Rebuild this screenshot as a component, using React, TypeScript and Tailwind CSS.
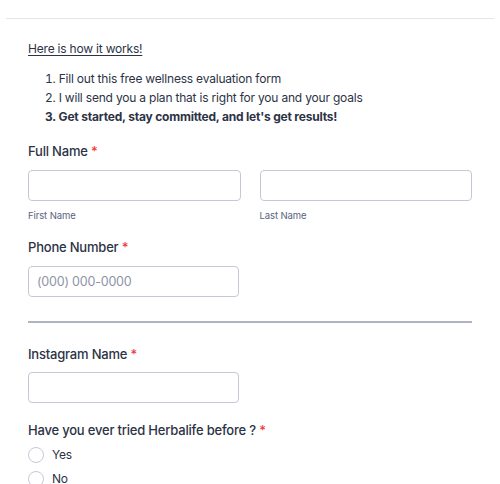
export default function App() {
  return (
    <div className="w-[500px] h-[484px] overflow-hidden bg-white text-[#2c3345]" style={{ fontFamily: 'Inter, "Noto Sans", sans-serif' }}>
      <div className="pt-[18px] px-[6px]">
        <div className="h-px bg-[#e3e5ea]" />
      </div>

      <div className="px-[28px]">
        <p className="mt-[21px] text-[12px] leading-[18px] tracking-[-0.2px] underline underline-offset-2 decoration-[#2c3345]">Here is how it works!</p>
        <ol className="mt-[11px] pl-[17px] text-[12px] leading-[19px] tracking-[-0.2px] list-decimal list-inside">
          <li>Fill out this free wellness evaluation form</li>
          <li>I will send you a plan that is right for you and your goals</li>
          <li className="font-bold">Get started, stay committed, and let's get results!</li>
        </ol>

        {/* Full Name */}
        <div className="mt-[15px]">
          <label className="block text-[13px] leading-[20px] tracking-[-0.2px] font-medium">
            Full Name <span className="text-[#f23a3c]">*</span>
          </label>
          <div className="mt-[9px] grid grid-cols-2 gap-[19px]">
            <div>
              <input className="block w-full h-[31px] rounded-[4px] border border-[#c5c9d6] bg-white" />
              <span className="block mt-[8px] text-[9.5px] leading-[14px] tracking-[-0.1px] text-[#57647e]">First Name</span>
            </div>
            <div>
              <input className="block w-full h-[31px] rounded-[4px] border border-[#c5c9d6] bg-white" />
              <span className="block mt-[8px] text-[9.5px] leading-[14px] tracking-[-0.1px] text-[#57647e]">Last Name</span>
            </div>
          </div>
        </div>

        {/* Phone */}
        <div className="mt-[14px]">
          <label className="block text-[13px] leading-[20px] tracking-[-0.2px] font-medium">
            Phone Number <span className="text-[#f23a3c]">*</span>
          </label>
          <input
            placeholder="(000) 000-0000"
            className="mt-[9px] block w-[211px] h-[31px] rounded-[4px] border border-[#c5c9d6] bg-white px-[8px] text-[12.5px] tracking-[-0.2px] placeholder:text-[#8d94a6]"
          />
        </div>

        <div className="mt-[24px] h-[2px] bg-[#b0b4c0]" />

        {/* Instagram */}
        <div className="mt-[21px]">
          <label className="block text-[13px] leading-[20px] tracking-[-0.2px] font-medium">
            Instagram Name <span className="text-[#f23a3c]">*</span>
          </label>
          <input className="mt-[8px] block w-[211px] h-[31px] rounded-[4px] border border-[#c5c9d6] bg-white" />
        </div>

        {/* Herbalife */}
        <div className="mt-[17px]">
          <label className="block text-[13px] leading-[20px] tracking-[-0.2px] font-medium">
            Have you ever tried Herbalife before ? <span className="text-[#f23a3c]">*</span>
          </label>
          <div className="mt-[7px] flex flex-col gap-[8px]">
            {['Yes', 'No'].map((o) => (
              <label key={o} className="flex items-center gap-[8px] text-[12px] leading-[16px] tracking-[-0.2px]">
                <span className="w-[16px] h-[16px] rounded-full border border-[#c5c9d6] bg-white" />
                {o}
              </label>
            ))}
          </div>
        </div>
      </div>
    </div>
  );
}
